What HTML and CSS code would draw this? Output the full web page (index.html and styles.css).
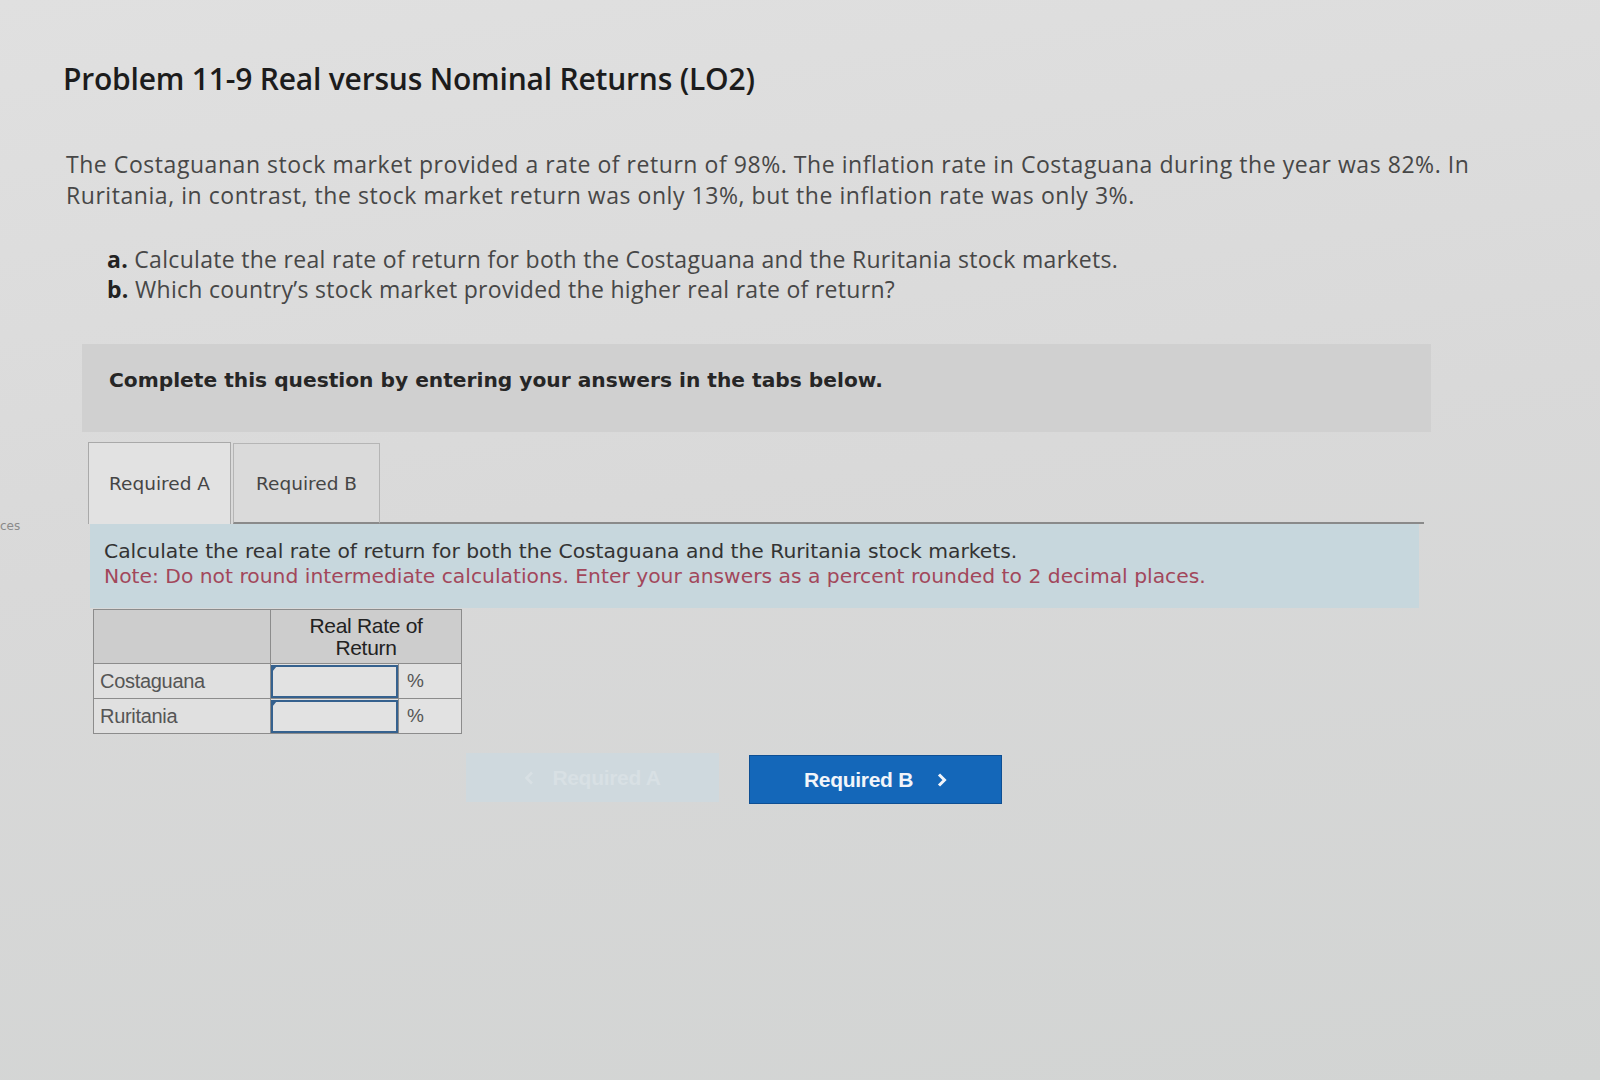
FILE: index.html
```html
<!DOCTYPE html>
<html>
<head>
<meta charset="utf-8">
<link rel="stylesheet" href="styles.css">
</head>
<body>
<div class="edge">ces</div>
<main class="page">
  <h1 class="title">Problem 11-9 Real versus Nominal Returns (LO2)</h1>
  <p class="intro">The Costaguanan stock market provided a rate of return of 98%. The inflation rate in Costaguana during the year was 82%. In Ruritania, in contrast, the stock market return was only 13%, but the inflation rate was only 3%.</p>
  <ol class="parts">
    <li><b>a.</b> Calculate the real rate of return for both the Costaguana and the Ruritania stock markets.</li>
    <li><b>b.</b> Which country’s stock market provided the higher real rate of return?</li>
  </ol>
  <div class="complete">Complete this question by entering your answers in the tabs below.</div>
  <div class="tabs">
    <div class="tab active">Required A</div>
    <div class="tab">Required B</div>
    <div class="tabline"></div>
  </div>
  <div class="instr">
    <div class="instr-main">Calculate the real rate of return for both the Costaguana and the Ruritania stock markets.</div>
    <div class="note">Note: Do not round intermediate calculations. Enter your answers as a percent rounded to 2 decimal places.</div>
  </div>
  <table class="grid">
    <tr class="head">
      <th class="c1"></th>
      <th class="c2" colspan="2">Real Rate of<br>Return</th>
    </tr>
    <tr>
      <td class="c1">Costaguana</td>
      <td class="inp"><span class="box"></span></td>
      <td class="pct">%</td>
    </tr>
    <tr>
      <td class="c1">Ruritania</td>
      <td class="inp"><span class="box"></span></td>
      <td class="pct">%</td>
    </tr>
  </table>
  <div class="nav">
    <div class="btn prev"><svg class="chev-l" width="10" height="14" viewBox="0 0 10 14"><polyline points="8,1.5 2.5,7 8,12.5" fill="none" stroke="currentColor" stroke-width="2.6"/></svg>Required A</div>
    <div class="btn next">Required B<svg class="chev-r" width="10" height="14" viewBox="0 0 10 14"><polyline points="2,1.5 7.5,7 2,12.5" fill="none" stroke="currentColor" stroke-width="3"/></svg></div>
  </div>
</main>
</body>
</html>
```
FILE: styles.css
```css
html, body {
  margin: 0;
  padding: 0;
}
body {
  width: 1600px;
  height: 1080px;
  overflow: hidden;
  background: linear-gradient(172deg, #e0e0e0 0%, #d9d9d9 45%, #d2d4d3 100%);
  font-family: "Open Sans", Lato, sans-serif;
  color: #3a3a3a;
  position: relative;
}
.edge {
  position: absolute;
  left: 0;
  top: 519px;
  font-family: "DejaVu Sans", sans-serif;
  font-size: 12px;
  color: #8a8a8a;
}
.page {
  padding: 60px 0 0 63px;
}
.title {
  margin: 0;
  font-size: 30px;
  font-weight: 600;
  color: #1c1c1c;
  line-height: 38px;
  letter-spacing: -0.2px;
}
.intro {
  margin: 51px 0 0 3px;
  width: 1420px;
  font-size: 23px;
  letter-spacing: 0.55px;
  line-height: 31px;
  color: #474747;
}
.parts {
  list-style: none;
  margin: 33px 0 0 44px;
  padding: 0;
  font-size: 23px;
  letter-spacing: 0.3px;
  line-height: 30px;
  color: #474747;
}
.parts b {
  color: #222;
  font-weight: 700;
}
.complete {
  margin: 40px 0 0 19px;
  width: 1349px;
  height: 88px;
  box-sizing: border-box;
  padding: 0 0 17px 27px;
  display: flex;
  align-items: center;
  background: #d0d0d0;
  font-family: "DejaVu Sans", sans-serif;
  font-weight: 700;
  font-size: 20.2px;
  color: #262626;
}
.tabs {
  margin: 10px 0 0 25px;
  display: flex;
  align-items: flex-end;
  height: 82px;
}
.tab {
  box-sizing: border-box;
  height: 81px;
  width: 147px;
  display: flex;
  align-items: center;
  justify-content: center;
  padding-bottom: 0;
  border: 1px solid #b5b5b5;
  border-bottom: 2px solid #8a8a8a;
  background: #dadada;
  font-family: "DejaVu Sans", sans-serif;
  font-size: 18.5px;
  color: #454545;
}
.tab.active {
  width: 143px;
  height: 82px;
  background: #e2e2e2;
  border-color: #a9a9a9;
  border-bottom: none;
  margin-right: 2px;
}
.tabline {
  width: 1044px;
  height: 0;
  border-top: 2px solid #8a8a8a;
}
.instr {
  margin: 0 0 0 27px;
  width: 1329px;
  height: 84px;
  box-sizing: border-box;
  padding: 15px 0 0 14px;
  background: #c7d7dd;
  font-family: "DejaVu Sans", sans-serif;
  font-size: 20.3px;
  line-height: 24.5px;
}
.instr-main {
  color: #333;
}
.note {
  color: #a2475b;
}
.grid {
  margin: 1px 0 0 30px;
  border-collapse: collapse;
  font-family: "Liberation Sans", Arial, sans-serif;
  font-size: 19px;
  color: #333;
}
.grid th, .grid td {
  border: 1.5px solid #8c8c8c;
  padding: 0;
}
.grid .head th {
  background: #cdcdcd;
  height: 53px;
  font-weight: 400;
  font-size: 21px;
  color: #222;
  line-height: 22px;
  letter-spacing: -0.3px;
}
.grid th.c1, .grid td.c1 {
  width: 170px;
}
.grid td.c1 {
  height: 34px;
  padding-left: 6px;
  text-align: left;
  background: #e0e0e0;
  color: #555;
  font-size: 20px;
  letter-spacing: -0.3px;
}
.grid td.inp {
  width: 127px;
  padding: 0;
  background: #e2e2e2;
}
.grid td.inp .box {
  display: block;
  height: 33px;
  box-sizing: border-box;
  border: 2px solid #35618e;
  position: relative;
}
.grid td.inp .box::before {
  content: "";
  position: absolute;
  left: -1px;
  top: -1px;
  border-left: 5px solid #35618e;
  border-bottom: 6px solid transparent;
}
.grid td.pct {
  width: 54px;
  padding-left: 8px;
  background: #e2e2e2;
  color: #555;
}
.nav {
  margin: 19px 0 0 403px;
  display: flex;
  align-items: flex-start;
  gap: 30px;
}
.btn {
  height: 49px;
  display: flex;
  align-items: center;
  justify-content: center;
  font-family: "Liberation Sans", Arial, sans-serif;
  font-weight: 700;
  font-size: 21px;
  box-sizing: border-box;
  letter-spacing: -0.3px;
}
.prev {
  width: 253px;
  background: #cfd9de;
  color: #d8e0e4;
}
.chev-l {
  margin-right: 18px;
}
.next {
  width: 253px;
  margin-top: 2px;
  background: #1467b9;
  color: #f2f5fa;
  border: 1px solid #0e4f93;
}
.chev-r {
  margin-left: 24px;
}
```
